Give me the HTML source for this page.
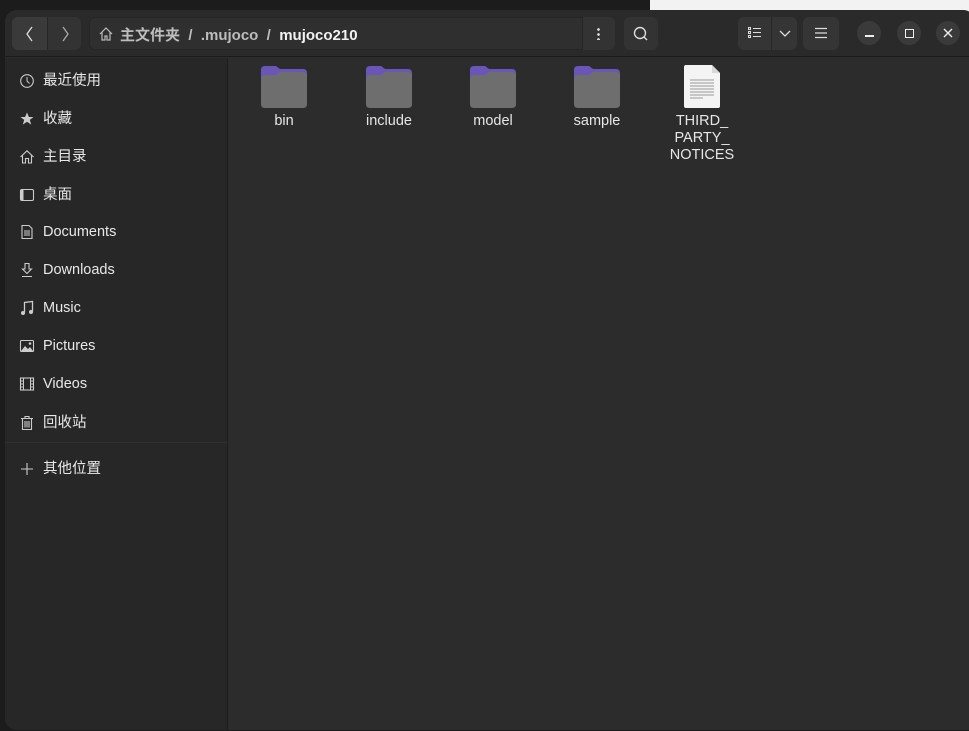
<!DOCTYPE html>
<html><head><meta charset="utf-8"><style>
*{margin:0;padding:0;box-sizing:border-box}
body{width:969px;height:731px;overflow:hidden;background:#1c1c1c;font-family:"Liberation Sans","Noto Sans CJK SC",sans-serif;position:relative}
.topbg{position:absolute;left:650px;top:0;width:319px;height:12px;background:#f2f2f2}
.win{position:absolute;left:5px;top:10px;width:970px;height:720px;background:#2c2c2c;border-radius:12px 12px 0 12px;overflow:hidden}
.hdr{position:absolute;left:0;top:0;right:0;height:47px;background:#2a2a2a;border-bottom:1px solid #1b1b1b}
.btn{position:absolute;top:7px;height:33px;background:#383838;border-radius:6px}
.side{position:absolute;left:0;top:48px;width:223px;bottom:0;background:#272727;border-right:1px solid #1d1d1d}
.it{position:absolute;left:14px;color:#e8e8e8;font-size:14.5px;height:20px;line-height:20px}
.it svg{position:absolute;left:0;top:2px}
.it span{position:absolute;left:24px;white-space:nowrap}
.f{position:absolute;top:56px;width:90px;text-align:center;color:#e6e6e6;font-size:14.5px;line-height:17px}
.circ{position:absolute;top:11px;width:24px;height:24px;border-radius:50%;background:#3a3a3a}
</style></head><body>
<div class="topbg"></div>
<div class="win">
 <div class="hdr">
  <div class="btn" style="left:7px;width:69px;background:#333"></div>
  <div style="position:absolute;left:42px;top:7px;width:1px;height:33px;background:#262626"></div>
  <div style="position:absolute;left:7px;top:7px;width:35px;height:33px;background:#3a3a3a;border-radius:6px 0 0 6px"></div>
  <svg style="position:absolute;left:18px;top:15px" width="14" height="18"><path d="M9 2 L4 9 L9 16" stroke="#ddd" fill="none" stroke-width="1.3"/></svg>
  <svg style="position:absolute;left:53px;top:15px" width="14" height="18"><path d="M5 2 L10 9 L5 16" stroke="#aaa" fill="none" stroke-width="1.3"/></svg>
  <div class="btn" style="left:84px;width:526px;background:#2f2f2f;border:1px solid #262626"></div>
  <svg style="position:absolute;left:93px;top:16px" width="16" height="15"><path d="M2 8 L8 2 L14 8 M4 6 V14 H7 V10 H9 V14 H12 V6" stroke="#bbb" fill="none" stroke-width="1.2"/></svg>
  <div style="position:absolute;left:115px;top:14px;font-size:15px;color:#bdbdbd;font-weight:bold;white-space:nowrap">主文件夹 &nbsp;/&nbsp; .mujoco &nbsp;/&nbsp; <span style="color:#f2f2f2">mujoco210</span></div>
  <div class="btn" style="left:577px;width:33px;border-radius:0 6px 6px 0;background:#333;border-left:1px solid #262626"></div>
  <div style="position:absolute;left:592px;top:17px;width:3px;height:13px;background:radial-gradient(circle,#ddd 1.2px,transparent 1.5px) 0 0/3px 5px"></div>
  <div class="btn" style="left:619px;width:34px;background:#333"></div>
  <svg style="position:absolute;left:627px;top:15px" width="18" height="18"><circle cx="8" cy="8" r="5.5" stroke="#ddd" fill="none" stroke-width="1.4"/><path d="M12 12 L15 15" stroke="#ddd" stroke-width="1.4"/></svg>
  <div class="btn" style="left:733px;width:59px;background:#353535"></div>
  <div style="position:absolute;left:766px;top:7px;width:1px;height:33px;background:#262626"></div>
  <svg style="position:absolute;left:742px;top:16px" width="16" height="14"><g fill="none" stroke="#ddd" stroke-width="1"><rect x="1.5" y="1.5" width="2" height="2"/><rect x="1.5" y="5.5" width="2" height="2"/><rect x="1.5" y="9.5" width="2" height="2"/></g><path d="M6 2.5H14M6 6.5H14M6 10.5H14" stroke="#ddd"/></svg>
  <svg style="position:absolute;left:773px;top:18px" width="14" height="10"><path d="M2 3 L7 8 L12 3" stroke="#ddd" fill="none" stroke-width="1.3"/></svg>
  <div class="btn" style="left:798px;width:36px;background:#353535"></div>
  <svg style="position:absolute;left:809px;top:17px" width="14" height="12"><path d="M1 1.5H13M1 6H13M1 10.5H13" stroke="#ddd" stroke-width="1.2"/></svg>
  <div class="circ" style="left:852px"></div>
  <div style="position:absolute;left:860px;top:25px;width:9px;height:1.5px;background:#eee"></div>
  <div class="circ" style="left:892px"></div>
  <div style="position:absolute;left:900px;top:19px;width:9px;height:9px;border:1.3px solid #eee"></div>
  <div class="circ" style="left:931px"></div>
  <svg style="position:absolute;left:938px;top:18px" width="10" height="10"><path d="M1 1L9 9M9 1L1 9" stroke="#eee" stroke-width="1.4"/></svg>
 </div>
 <div class="side">
  <div class="it" style="top:13px"><svg width="16" height="16"><circle cx="8" cy="8" r="6.3" stroke="#ccc" fill="none" stroke-width="1.1"/><path d="M8 4V8L10.5 10.5" stroke="#ccc" fill="none"/></svg><span>最近使用</span></div>
  <div class="it" style="top:51px"><svg width="16" height="16"><path d="M8 1.5L9.9 6H14.5L10.8 8.9L12.2 13.6L8 10.8L3.8 13.6L5.2 8.9L1.5 6H6.1Z" fill="#ccc"/></svg><span>收藏</span></div>
  <div class="it" style="top:89px"><svg width="16" height="16"><path d="M1.5 8 L8 1.8 L14.5 8 M3.5 6.5V14H6.5V9.5H9.5V14H12.5V6.5" stroke="#ccc" fill="none" stroke-width="1.1"/></svg><span>主目录</span></div>
  <div class="it" style="top:127px"><svg width="16" height="16"><rect x="1.5" y="2.5" width="13" height="11" rx="1.5" stroke="#ccc" fill="none" stroke-width="1.1"/><rect x="2" y="3" width="2.5" height="10" fill="#ccc"/></svg><span>桌面</span></div>
  <div class="it" style="top:164px"><svg width="16" height="16"><path d="M3 1.5H10L13 4.5V14.5H3Z" stroke="#ccc" fill="none" stroke-width="1.1"/><path d="M5 7H11M5 9H11M5 11H11" stroke="#ccc"/></svg><span>Documents</span></div>
  <div class="it" style="top:202px"><svg width="16" height="16"><path d="M6 1.5H10V7H12.5L8 11.5L3.5 7H6Z M3 14.5H13" stroke="#ccc" fill="none" stroke-width="1.1"/></svg><span>Downloads</span></div>
  <div class="it" style="top:240px"><svg width="16" height="16"><path d="M5.5 12.5V2.5L13.5 1.5V11.5" stroke="#ccc" fill="none" stroke-width="1.3"/><circle cx="4" cy="13" r="2" fill="#ccc"/><circle cx="12" cy="12" r="2" fill="#ccc"/></svg><span>Music</span></div>
  <div class="it" style="top:278px"><svg width="16" height="16"><rect x="1.5" y="2.5" width="13" height="11" rx="1" stroke="#ccc" fill="none" stroke-width="1.1"/><path d="M2 13L6 8L9 11L11 9L14 13Z" fill="#ccc"/><circle cx="11" cy="5.5" r="1.3" fill="#ccc"/></svg><span>Pictures</span></div>
  <div class="it" style="top:316px"><svg width="16" height="16"><rect x="1.5" y="2" width="13" height="12" stroke="#ccc" fill="none" stroke-width="1.1"/><path d="M4.5 2V14M11.5 2V14M1.5 5H4.5M1.5 8H4.5M1.5 11H4.5M11.5 5H14.5M11.5 8H14.5M11.5 11H14.5" stroke="#ccc"/></svg><span>Videos</span></div>
  <div class="it" style="top:355px"><svg width="16" height="16"><path d="M2 3.5H14M6 3.5V1.5H10V3.5M3.5 3.5V14.5H12.5V3.5M6 6V12.5M8 6V12.5M10 6V12.5" stroke="#ccc" fill="none" stroke-width="1.1"/></svg><span>回收站</span></div>
  <div style="position:absolute;left:0;right:0;top:384px;height:1px;background:#2f2f2f"></div>
  <div class="it" style="top:401px"><svg width="16" height="16"><path d="M8 2V14M2 8H14" stroke="#ccc" stroke-width="1.1"/></svg><span>其他位置</span></div>
 </div>
 <svg width="0" height="0" style="position:absolute"><defs><symbol id="fold" viewBox="0 0 46 42"><path d="M0 4Q0 0 4 0H15L19 3H42Q46 3 46 7V20H0Z" fill="#6a55b8"/><path d="M0 13Q0 9 4 9H15L19 6H42Q46 6 46 10V38Q46 42 42 42H4Q0 42 0 38Z" fill="#6e6e6e"/></symbol></defs></svg>
 <svg style="position:absolute;left:256px;top:56px" width="46" height="42"><use href="#fold"/></svg>
 <div class="f" style="left:234px;top:103px">bin</div>
 <svg style="position:absolute;left:361px;top:56px" width="46" height="42"><use href="#fold"/></svg>
 <div class="f" style="left:339px;top:103px">include</div>
 <svg style="position:absolute;left:465px;top:56px" width="46" height="42"><use href="#fold"/></svg>
 <div class="f" style="left:443px;top:103px">model</div>
 <svg style="position:absolute;left:569px;top:56px" width="46" height="42"><use href="#fold"/></svg>
 <div class="f" style="left:547px;top:103px">sample</div>
 <svg style="position:absolute;left:678px;top:55px" width="38" height="44"><path d="M3 0H29L37 8V41Q37 43 35 43H3Q1 43 1 41V2Q1 0 3 0Z" fill="#f4f4f4"/><path d="M29 0V8H37" fill="#d8d8d8"/><path d="M7 15H31M7 18H31M7 21H31M7 24H31M7 27H31M7 30H31M7 33H20" stroke="#999" stroke-width="0.9"/></svg>
 <div class="f" style="left:652px;top:103px">THIRD_<br>PARTY_<br>NOTICES</div>
</div>
</body></html>
